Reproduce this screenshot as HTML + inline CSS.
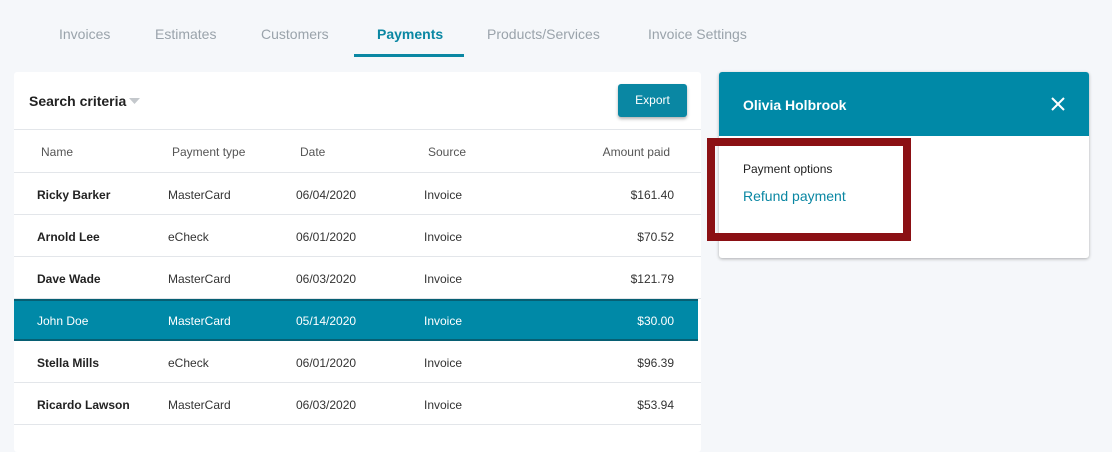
<!DOCTYPE html><html><head><style>
*{box-sizing:border-box;margin:0;padding:0}
body{width:1112px;height:438px;overflow:hidden;background:#f5f7fa;font-family:"Liberation Sans",sans-serif;position:relative}
.tab{position:absolute;top:26px;font-size:14px;color:#9aa3ab}
.card{position:absolute;left:14px;top:72px;width:687px;height:380px;background:#fff;border-radius:3px}
.row{position:absolute;left:0;width:687px;height:42px;border-bottom:1px solid #e3e6ea;font-size:12px;color:#333}
.row span{position:absolute;top:15px}
.row .n{left:23px;font-weight:bold;color:#222}
.row .t{left:154px}.row .d{left:282px}.row .s{left:410px}.row .a{right:27px}
.sel{background:#0089a7;color:#fff;border-top:2px solid #075f73;border-bottom:2px solid #075f73;width:684px}
.sel span,.sel .n{color:#fff;font-weight:normal}
</style></head><body>
<div class="tab" style="left:59px">Invoices</div>
<div class="tab" style="left:155px">Estimates</div>
<div class="tab" style="left:261px">Customers</div>
<div class="tab" style="left:377px;color:#0a87a3;font-weight:bold">Payments</div>
<div style="position:absolute;left:354px;top:54px;width:110px;height:3px;background:#0a87a3"></div>
<div class="tab" style="left:487px">Products/Services</div>
<div class="tab" style="left:648px">Invoice Settings</div>
<div class="card">
<div style="position:absolute;left:15px;top:21px;font-size:14px;font-weight:bold;color:#222">Search criteria</div>
<svg style="position:absolute;left:115px;top:26px" width="11" height="6" viewBox="0 0 11 6"><path d="M0 0H11L5.5 6Z" fill="#c4c8cc"/></svg>
<div style="position:absolute;left:604px;top:12px;width:69px;height:33px;background:#0a87a3;border-radius:3px;color:#fff;font-size:12px;text-align:center;line-height:33px;box-shadow:0 2px 3px rgba(0,0,0,.3)">Export</div>
<div class="row" style="top:57px;height:44px;border-top:1px solid #e3e6ea;color:#555"><span style="left:27px;top:15px">Name</span><span style="left:158px;top:15px">Payment type</span><span style="left:286px;top:15px">Date</span><span style="left:414px;top:15px">Source</span><span style="right:31px;top:15px">Amount paid</span></div>
<div class="row" style="top:101px"><span class="n">Ricky Barker</span><span class="t">MasterCard</span><span class="d">06/04/2020</span><span class="s">Invoice</span><span class="a">$161.40</span></div>
<div class="row" style="top:143px"><span class="n">Arnold Lee</span><span class="t">eCheck</span><span class="d">06/01/2020</span><span class="s">Invoice</span><span class="a">$70.52</span></div>
<div class="row" style="top:185px"><span class="n">Dave Wade</span><span class="t">MasterCard</span><span class="d">06/03/2020</span><span class="s">Invoice</span><span class="a">$121.79</span></div>
<div class="row sel" style="top:227px"><span class="n" style="top:13px">John Doe</span><span class="t" style="top:13px">MasterCard</span><span class="d" style="top:13px">05/14/2020</span><span class="s" style="top:13px">Invoice</span><span class="a" style="top:13px;right:24px">$30.00</span></div>
<div class="row" style="top:269px"><span class="n">Stella Mills</span><span class="t">eCheck</span><span class="d">06/01/2020</span><span class="s">Invoice</span><span class="a">$96.39</span></div>
<div class="row" style="top:311px"><span class="n">Ricardo Lawson</span><span class="t">MasterCard</span><span class="d">06/03/2020</span><span class="s">Invoice</span><span class="a">$53.94</span></div>
</div>
<div style="position:absolute;left:719px;top:72px;width:370px;height:186px;background:#fff;border-radius:3px;box-shadow:0 1px 3px rgba(0,0,0,.3);overflow:hidden">
<div style="height:64px;background:#0089a7;color:#fff;font-size:14px;font-weight:bold;padding:25px 0 0 24px">Olivia Holbrook
<svg style="position:absolute;right:24px;top:25px" width="14" height="14" viewBox="0 0 14 14"><path d="M1 1L13 13M13 1L1 13" stroke="#fff" stroke-width="2"/></svg></div>
</div>
<div style="position:absolute;left:707px;top:138px;width:204px;height:103px;border:8px solid #8b1014"></div>
<div style="position:absolute;left:743px;top:162px;font-size:12px;color:#222">Payment options</div>
<div style="position:absolute;left:743px;top:188px;font-size:14px;color:#0a87a3">Refund payment</div>
</body></html>
